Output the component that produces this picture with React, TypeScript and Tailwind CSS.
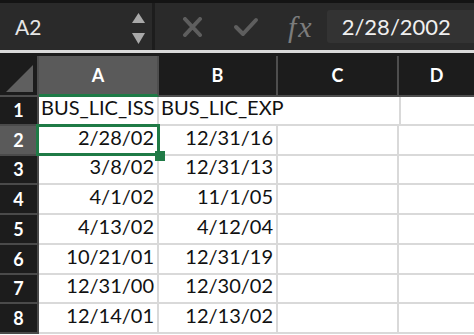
import React from 'react';

const ROWS: { n: number; a: string; b: string; h: string }[] = [
  { n: 1, a: 'BUS_LIC_ISS', b: 'BUS_LIC_EXP', h: 'h-[29px]' },
  { n: 2, a: '2/28/02', b: '12/31/16', h: 'h-[30px]' },
  { n: 3, a: '3/8/02', b: '12/31/13', h: 'h-[29px]' },
  { n: 4, a: '4/1/02', b: '11/1/05', h: 'h-[30px]' },
  { n: 5, a: '4/13/02', b: '4/12/04', h: 'h-[30px]' },
  { n: 6, a: '10/21/01', b: '12/31/19', h: 'h-[30px]' },
  { n: 7, a: '12/31/00', b: '12/30/02', h: 'h-[29px]' },
  { n: 8, a: '12/14/01', b: '12/13/02', h: 'h-[30px]' },
];

function FormulaBar() {
  return (
    <div className="flex h-[47px] bg-[#2a2a2a]">
      {/* Name box */}
      <div className="relative flex w-[152px] items-center pl-[15px] text-[21px] text-[#e6e6e6]">
        A2
        <svg className="absolute left-[131px] top-[9px]" width="15" height="34" viewBox="0 0 15 34">
          <polygon points="7.5,1 14,11 1,11" fill="#a9a9a9" />
          <polygon points="1,21 14,21 7.5,32" fill="#a9a9a9" />
        </svg>
      </div>
      <div className="w-[3px] bg-[#1d1d1d]" />
      {/* Cancel / enter / fx */}
      <div className="flex flex-1 items-center">
        <svg className="ml-[27px]" width="21" height="20" viewBox="0 0 21 20">
          <path d="M3 2 L18 18 M18 2 L3 18" stroke="#5e5e5e" strokeWidth="4" strokeLinecap="round" />
        </svg>
        <svg className="ml-[30px]" width="26" height="20" viewBox="0 0 26 20">
          <path d="M3 10 L10 17 L23 3" stroke="#5e5e5e" strokeWidth="4" fill="none" strokeLinecap="round" strokeLinejoin="round" />
        </svg>
        <span className="ml-[29px] font-['Liberation_Serif',serif] text-[30px] italic leading-none tracking-[2px] text-[#7c7c7c]">
          fx
        </span>
        <div className="ml-[13px] flex h-[33px] flex-1 items-center self-center rounded-l-[3px] bg-[#333333] pl-[15px] text-[22px] text-[#efefef]">
          2/28/2002
        </div>
      </div>
    </div>
  );
}

function HeaderRow() {
  return (
    <div className="flex h-[41px] bg-[#1c1c1c] text-[18px] font-bold text-white">
      <div className="w-[39px] border-r-2 border-b-2 border-[#4e4e4e]">
        <svg width="37" height="39" viewBox="0 0 37 39">
          <polygon points="6,36 33,36 33,9" fill="#5f5f5f" />
        </svg>
      </div>
      <div className="flex w-[120px] items-center justify-center border-r-2 border-b-[3px] border-r-[#4e4e4e] border-b-[#1e7a46] bg-[#5a5a5a]">
        A
      </div>
      <div className="flex w-[119px] items-center justify-center border-r-2 border-b-2 border-[#4e4e4e]">
        B
      </div>
      <div className="flex w-[121px] items-center justify-center border-r-2 border-b-2 border-[#4e4e4e]">
        C
      </div>
      <div className="flex flex-1 items-center justify-center border-b-2 border-[#4e4e4e]">
        D
      </div>
    </div>
  );
}

export default function App() {
  return (
    <div className="h-[335px] w-[474px] overflow-hidden bg-white font-['Lato',sans-serif]">
      <div className="h-[3px] bg-[#141414]" />
      <FormulaBar />
      <div className="h-[3px] bg-[#dadada]" />
      <div className="h-[3px] bg-[#1c1c1c]" />
      <HeaderRow />

      {ROWS.map((r) => {
        const sel = r.n === 2;
        const text = r.n !== 1;
        return (
          <div key={r.n} className={`flex ${r.h} text-[20px] text-[#111]`}>
            <div
              className={`flex w-[39px] items-center justify-center border-r-2 border-b-2 border-[#4a4a4a] text-[18px] font-bold text-white ${
                sel ? 'bg-[#5a5a5a]' : 'bg-[#1c1c1c]'
              }`}
            >
              {r.n}
            </div>
            <div
              className={`relative flex w-[120px] items-end border-r-2 border-b-2 border-[#d9d9d9] pb-[2px] whitespace-nowrap ${
                text ? 'justify-end pr-[3px]' : 'pl-[2px]'
              }`}
            >
              {r.a}
              {sel && (
                <div className="absolute -top-[2px] -left-[3px] -right-[3px] -bottom-[2px] z-10 border-[3px] border-[#1f7a46]">
                  <div className="absolute -right-[8px] -bottom-[8px] h-[10px] w-[10px] bg-[#1f7a46]" />
                </div>
              )}
            </div>
            <div
              className={`flex w-[119px] items-end border-b-2 border-[#d9d9d9] pb-[2px] whitespace-nowrap ${
                text ? 'justify-end border-r-2 pr-[3px]' : 'pl-[2px]'
              }`}
            >
              {r.b}
            </div>
            <div className={`border-r-2 border-b-2 border-[#d9d9d9] ${text ? 'w-[121px]' : 'w-[123px]'}`} />
            <div className="flex-1 border-b-2 border-[#d9d9d9]" />
          </div>
        );
      })}
    </div>
  );
}
